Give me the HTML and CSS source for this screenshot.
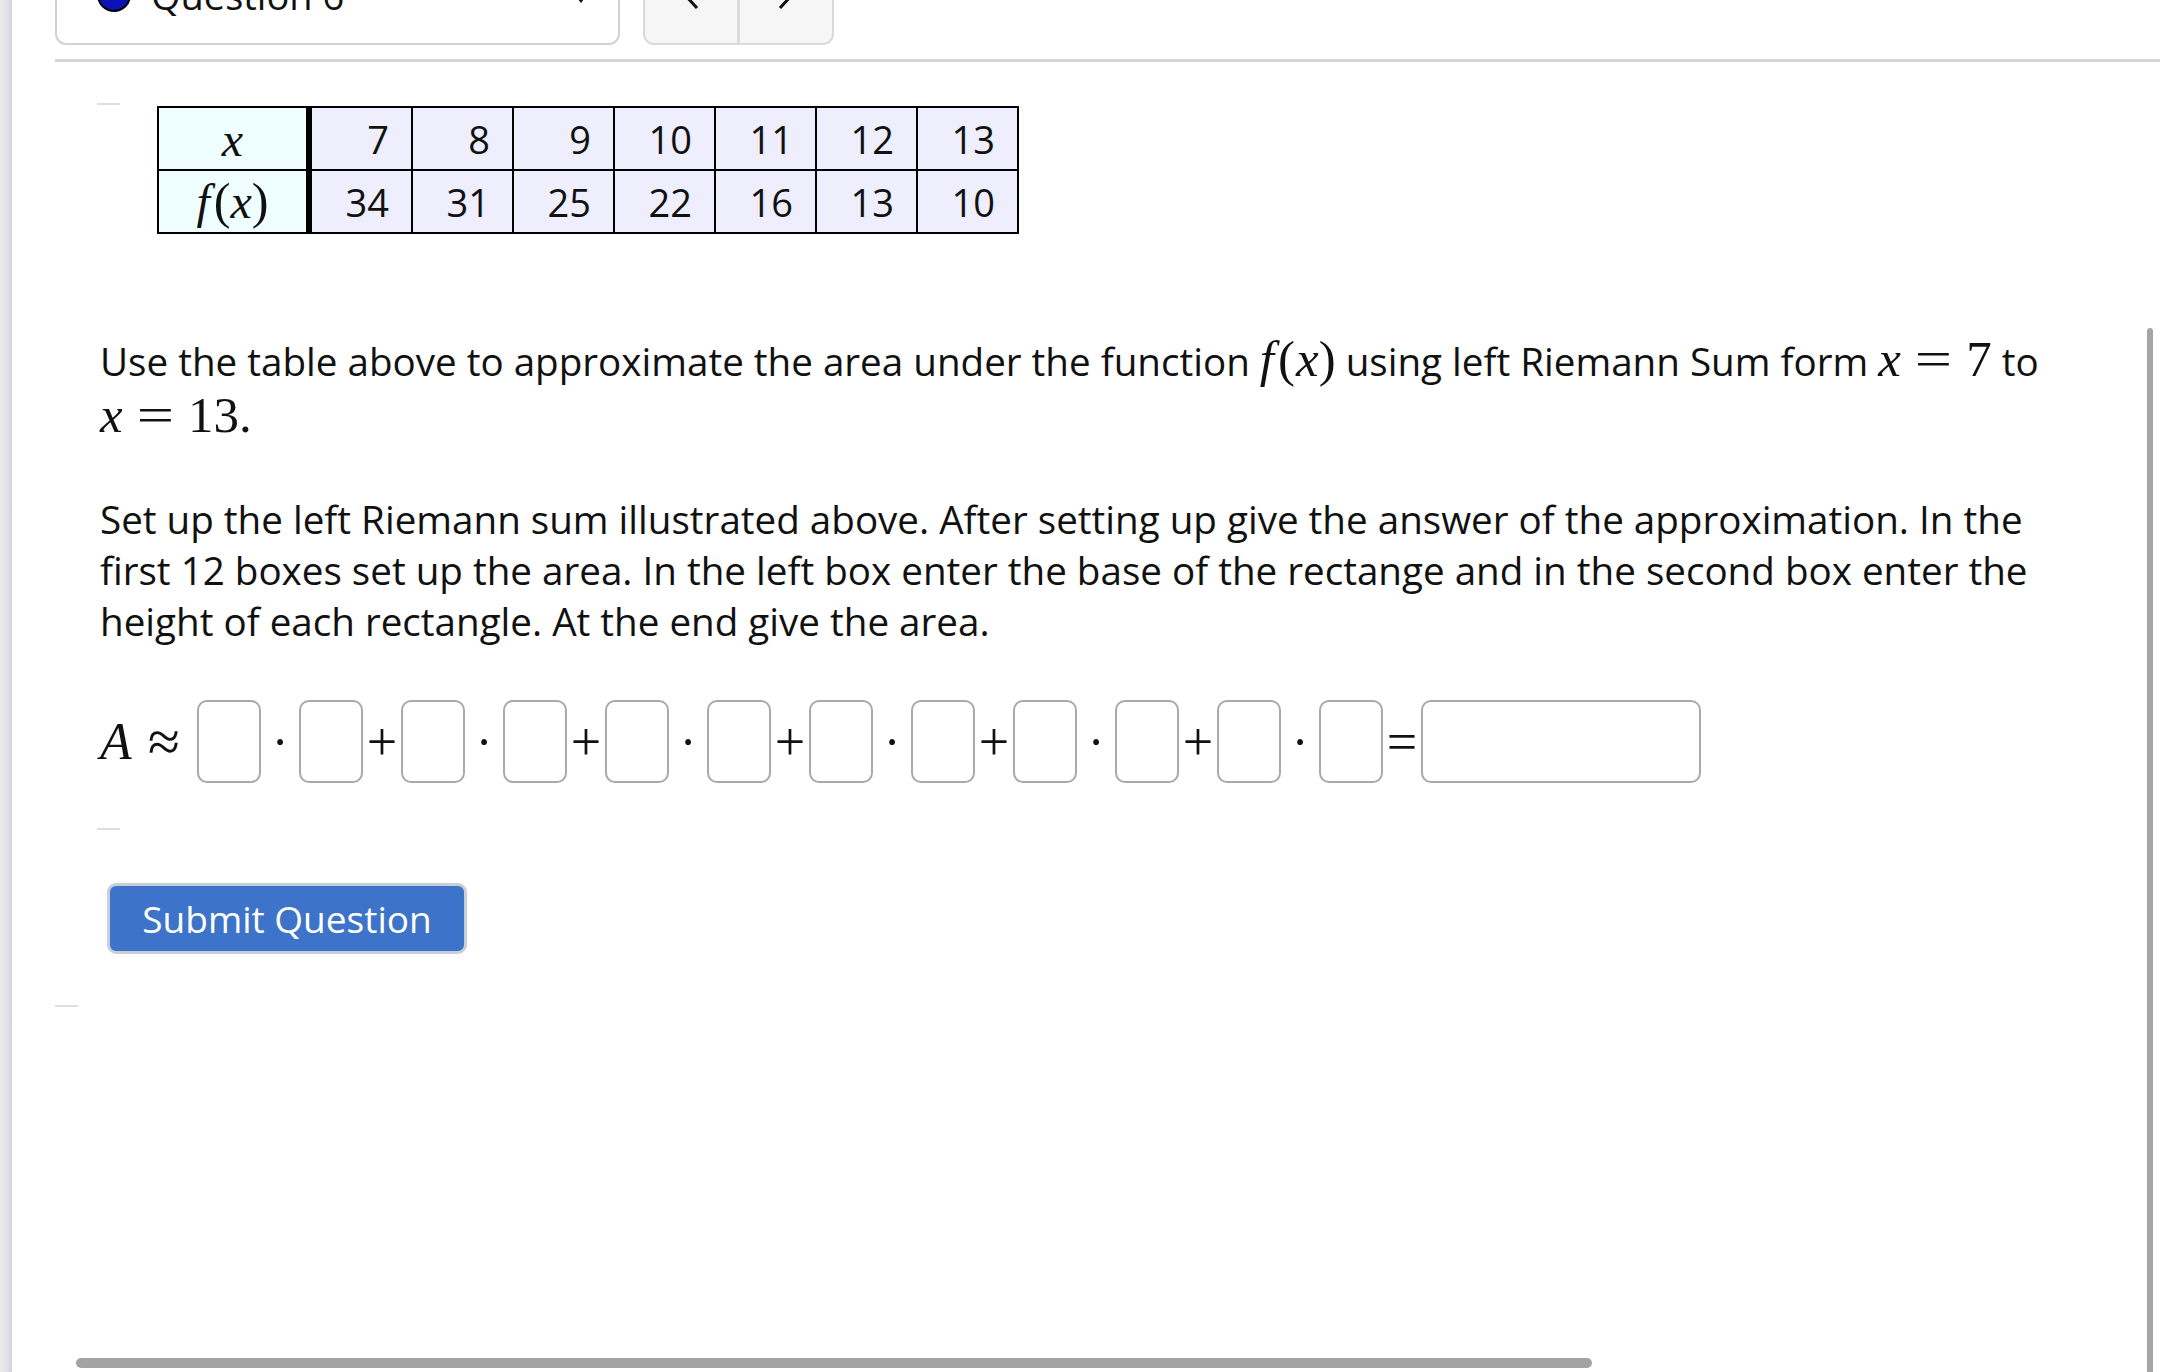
FILE: index.html
```html
<!DOCTYPE html>
<html lang="en">
<head>
<meta charset="utf-8">
<title>Question 6</title>
<link rel="stylesheet" href="styles.css">
</head>
<body>
<div class="page">
  <div class="edge"></div>
  <div class="main">
    <div class="topbar">
      <div class="qselect">
        <span class="qdot"></span>
        <span class="qlabel">Question 6</span>
        <span class="caret"></span>
      </div>
      <div class="qnav">
        <div class="navbtn">
          <svg width="16" height="28" viewBox="0 0 16 28"><polyline points="14,1 2,14 14,27" fill="none" stroke="#111" stroke-width="3"/></svg>
        </div>
        <div class="navbtn">
          <svg width="16" height="28" viewBox="0 0 16 28"><polyline points="2,1 14,14 2,27" fill="none" stroke="#111" stroke-width="3"/></svg>
        </div>
      </div>
    </div>
    <div class="rule"></div>

    <div class="question">
      <div class="mark"></div>
      <table class="vals">
        <tr>
          <td class="head"><span class="mi">x</span></td>
          <td>7</td><td>8</td><td>9</td><td>10</td><td>11</td><td>12</td><td>13</td>
        </tr>
        <tr>
          <td class="head"><span class="mi fn">f</span><span class="mo">(</span><span class="mi">x</span><span class="mo">)</span></td>
          <td>34</td><td>31</td><td>25</td><td>22</td><td>16</td><td>13</td><td>10</td>
        </tr>
      </table>

      <p class="p1">Use the table above to approximate the area under the function <span class="math"><span class="mi fn">f</span><span class="mo">(</span><span class="mi">x</span><span class="mo">)</span></span> using left Riemann Sum form <span class="math"><span class="mi">x</span><span class="rel">=</span><span class="mn">7</span></span> to <span class="math"><span class="mi">x</span><span class="rel">=</span><span class="mn">13.</span></span></p>

      <p class="p2">Set up the left Riemann sum illustrated above. After setting up give the answer of the approximation. In the first 12 boxes set up the area. In the left box enter the base of the rectange and in the second box enter the height of each rectangle. At the end give the area.</p>

      <div class="eq">
        <span class="eqA">A</span><span class="eqApprox">≈</span>
        <span class="box"></span><span class="op">·</span><span class="box"></span><span class="op plus">+</span>
        <span class="box"></span><span class="op">·</span><span class="box"></span><span class="op plus">+</span>
        <span class="box"></span><span class="op">·</span><span class="box"></span><span class="op plus">+</span>
        <span class="box"></span><span class="op">·</span><span class="box"></span><span class="op plus">+</span>
        <span class="box"></span><span class="op">·</span><span class="box"></span><span class="op plus">+</span>
        <span class="box"></span><span class="op">·</span><span class="box"></span><span class="op plus">=</span>
        <span class="box wide"></span>
      </div>

      <div class="mark"></div>
      <button class="submit" type="button">Submit Question</button>
      <div class="mark mark-out"></div>
    </div>
  </div>
  <div class="vscroll"></div>
  <div class="hscroll"></div>
</div>
</body>
</html>
```

FILE: styles.css
```css
html, body {
  margin: 0;
  padding: 0;
  background: #ffffff;
}
body {
  width: 2160px;
  height: 1372px;
  overflow: hidden;
  font-family: "Open Sans", "Lato", sans-serif;
  color: #111;
}
.page {
  position: relative;
  display: flex;
  width: 2160px;
  height: 1372px;
  overflow: hidden;
}
.edge {
  flex: 0 0 12px;
  background: linear-gradient(to right, #ececef 0%, #e3e3e7 60%, #cfcfd5 100%);
}
.main {
  flex: 1 1 auto;
  min-width: 0;
}

/* top bar (scrolled partially out of view) */
.topbar {
  display: flex;
  gap: 23px;
  margin-top: -55px;
  padding-left: 43px;
  height: 100px;
}
.qselect {
  box-sizing: border-box;
  width: 565px;
  height: 100px;
  border: 2px solid #d2d2d2;
  border-radius: 11px;
  display: flex;
  align-items: center;
  padding: 0 30px 0 40px;
  background: #fff;
}
.qdot {
  box-sizing: border-box;
  width: 34px;
  height: 34px;
  border-radius: 50%;
  background: #0a14b4;
  border: 2px solid #000;
  margin-right: 20px;
}
.qlabel {
  font-size: 38px;
  color: #111;
}
.caret {
  margin-left: auto;
  width: 0;
  height: 0;
  border-left: 7px solid transparent;
  border-right: 7px solid transparent;
  border-top: 9px solid #111;
  margin-top: 6px;
}
.qnav {
  box-sizing: border-box;
  width: 191px;
  height: 100px;
  display: flex;
  border: 2px solid #dadada;
  border-radius: 11px;
  background: #f6f6f6;
  overflow: hidden;
}
.navbtn {
  flex: 1 1 0;
  display: flex;
  align-items: center;
  justify-content: center;
}
.navbtn + .navbtn {
  border-left: 3px solid #dcdcdc;
}
.rule {
  height: 3px;
  background: #d4d4d4;
  margin: 14px 0 0 43px;
}

/* question body */
.question {
  padding-left: 88px;
  width: 1960px;
}
.mark {
  width: 23px;
  height: 2px;
  background: #dedede;
  margin-left: -3px;
}
.question > .mark:first-child {
  margin-top: 41px;
}

.vals {
  border-collapse: collapse;
  margin: 1px 0 0 57px;
  font-size: 38px;
}
.vals td {
  border: 2px solid #000;
  background: #eeeefc;
  width: 69px;
  height: 61px;
  padding: 0 22px 0 8px;
  text-align: right;
  line-height: 1;
}
.vals td.head {
  background: #effefe;
  width: 139px;
  padding: 0 4px;
  text-align: center;
  border-right: 6px solid #000;
  font-size: 48px;
}
.mi {
  font-family: "Liberation Serif", "Times New Roman", serif;
  font-style: italic;
}
.mi.fn {
  margin-right: 0.08em;
}
.mo, .mn, .rel {
  font-family: "Liberation Serif", "Times New Roman", serif;
  font-style: normal;
}
.head .mo {
  font-size: 1.05em;
}
.math {
  font-size: 1.32em;
  line-height: 1;
  white-space: nowrap;
}
.math .mo + .mi {
  margin-left: 1px;
}
.rel {
  margin: 0 0.36em;
  display: inline-block;
  transform: scaleX(1.3);
}

.p1, .p2 {
  margin: 0;
  font-size: 38.6px;
}
.p1 {
  margin-top: 98px;
  line-height: 54px;
}
.p2 {
  margin-top: 50px;
  line-height: 51px;
}

.eq {
  display: flex;
  align-items: center;
  margin-top: 53px;
  height: 83px;
  font-family: "Liberation Serif", "Times New Roman", serif;
  font-size: 50px;
}
.eqA {
  font-style: italic;
  font-size: 52px;
  width: 48px;
}
.eqApprox {
  width: 49px;
  font-size: 58px;
}
.box {
  box-sizing: border-box;
  width: 64px;
  height: 83px;
  border: 2px solid #a9a9a9;
  border-radius: 10px;
  background: #fff;
}
.box.wide {
  width: 280px;
}
.op {
  width: 38px;
  text-align: center;
  line-height: 1;
}
.op.plus {
  font-size: 54px;
}

.question > .eq + .mark {
  margin-top: 45px;
}
.submit {
  display: block;
  box-sizing: border-box;
  margin: 53px 0 0 7px;
  width: 360px;
  height: 71px;
  background: #3d74c9;
  color: #fff;
  border: 3px solid #c9cfd8;
  border-radius: 9px;
  font-family: "Open Sans", "Lato", sans-serif;
  font-size: 37px;
  padding: 0;
}
.mark.mark-out {
  margin-top: 51px;
  margin-left: -45px;
}

/* overlay scrollbars */
.vscroll {
  position: absolute;
  left: 2147px;
  top: 328px;
  width: 6px;
  height: 1060px;
  border-radius: 3px;
  background: #a4a4a4;
}
.hscroll {
  position: absolute;
  left: 76px;
  top: 1358px;
  width: 1516px;
  height: 10px;
  border-radius: 5px;
  background: #a3a3a3;
}
```
